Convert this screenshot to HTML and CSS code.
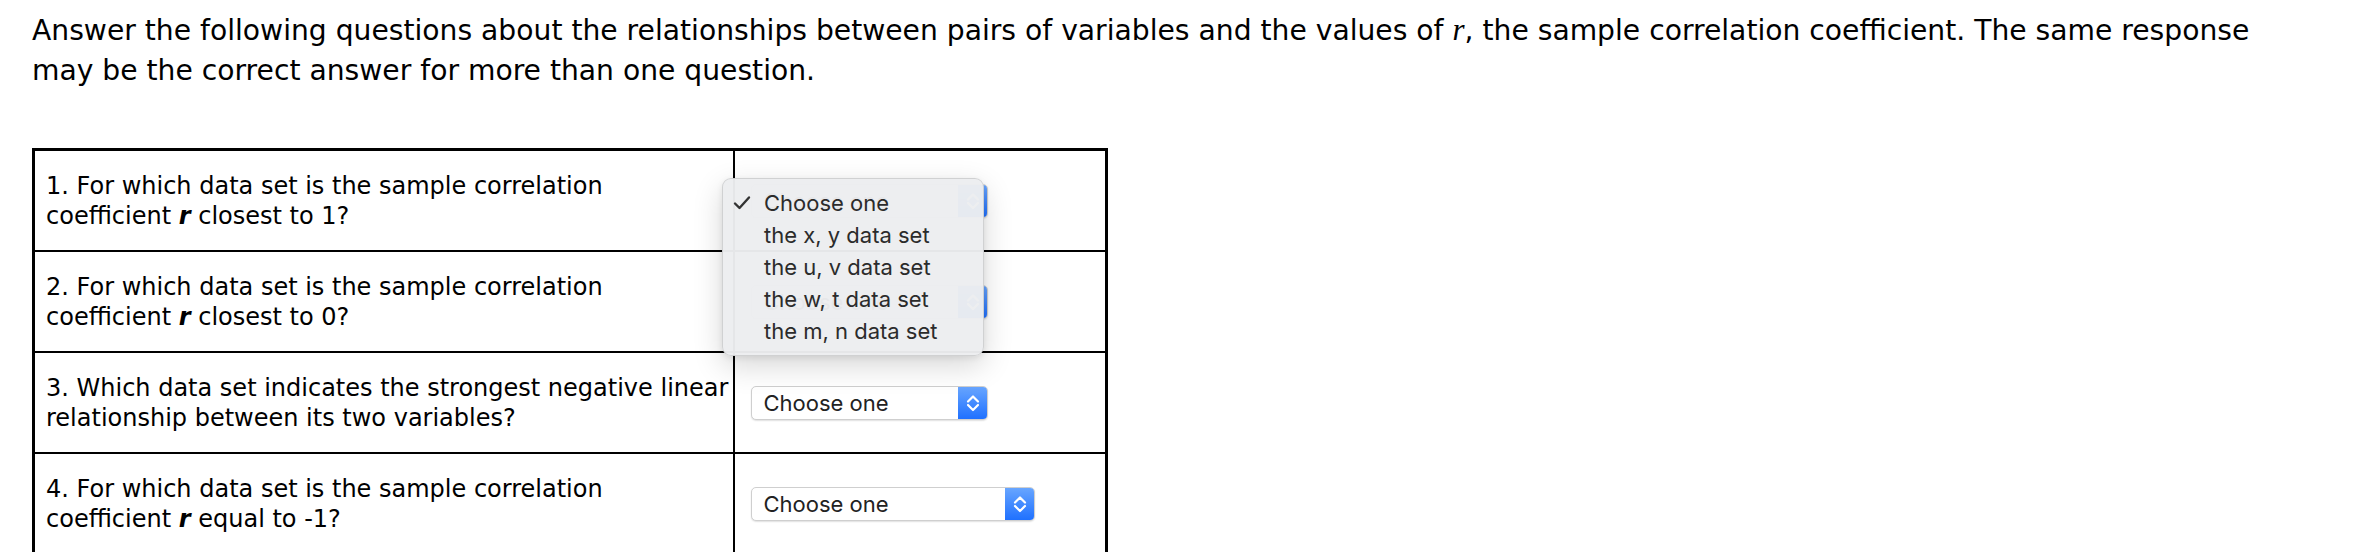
FILE: index.html
```html
<!DOCTYPE html>
<html>
<head>
<meta charset="utf-8">
<link rel="stylesheet" href="styles.css">
</head>
<body>
<div class="page">
  <p class="intro">Answer the following questions about the relationships between pairs of variables and the values of <span class="math">r</span>, the sample correlation coefficient. The same response may be the correct answer for more than one question.</p>
  <div class="quiz">
    <table class="qtable">
      <colgroup><col class="c1"><col class="c2"></colgroup>
      <tr>
        <td class="q">1. For which data set is the sample correlation coefficient <b><i>r</i></b> closest to 1?</td>
        <td class="a"><div class="select s-short"><span class="sel-text">Choose one</span><span class="sel-btn"><svg viewBox="0 0 30 34" width="30" height="34"><path d="M10 15.5 L15 10.5 L20 15.5 M10 19 L15 24 L20 19" fill="none" stroke="#fff" stroke-width="2.2" stroke-linecap="round" stroke-linejoin="round"/></svg></span></div></td>
      </tr>
      <tr>
        <td class="q">2. For which data set is the sample correlation coefficient <b><i>r</i></b> closest to 0?</td>
        <td class="a"><div class="select s-short"><span class="sel-text">Choose one</span><span class="sel-btn"><svg viewBox="0 0 30 34" width="30" height="34"><path d="M10 15.5 L15 10.5 L20 15.5 M10 19 L15 24 L20 19" fill="none" stroke="#fff" stroke-width="2.2" stroke-linecap="round" stroke-linejoin="round"/></svg></span></div></td>
      </tr>
      <tr>
        <td class="q">3. Which data set indicates the strongest negative linear relationship between its two variables?</td>
        <td class="a"><div class="select s-short"><span class="sel-text">Choose one</span><span class="sel-btn"><svg viewBox="0 0 30 34" width="30" height="34"><path d="M10 15.5 L15 10.5 L20 15.5 M10 19 L15 24 L20 19" fill="none" stroke="#fff" stroke-width="2.2" stroke-linecap="round" stroke-linejoin="round"/></svg></span></div></td>
      </tr>
      <tr>
        <td class="q">4. For which data set is the sample correlation coefficient <b><i>r</i></b> equal to -1?</td>
        <td class="a"><div class="select s-long"><span class="sel-text">Choose one</span><span class="sel-btn"><svg viewBox="0 0 30 34" width="30" height="34"><path d="M10 15.5 L15 10.5 L20 15.5 M10 19 L15 24 L20 19" fill="none" stroke="#fff" stroke-width="2.2" stroke-linecap="round" stroke-linejoin="round"/></svg></span></div></td>
      </tr>
    </table>
    <div class="menu">
      <div class="item checked"><svg class="check" viewBox="0 0 20 20" width="20" height="20"><path d="M3 10.5 L7.5 15 L17 4.5" fill="none" stroke="#333" stroke-width="2.4" stroke-linecap="round" stroke-linejoin="round"/></svg>Choose one</div>
      <div class="item">the x, y data set</div>
      <div class="item">the u, v data set</div>
      <div class="item">the w, t data set</div>
      <div class="item">the m, n data set</div>
    </div>
  </div>
</div>
</body>
</html>
```
FILE: styles.css
```css
html, body {
  margin: 0;
  padding: 0;
  background: #fff;
}
.page {
  padding: 10px 0 0 32px;
  font-family: "DejaVu Sans", sans-serif;
  color: #000;
}
.intro {
  margin: 0;
  max-width: 2250px;
  font-size: 28.2px;
  line-height: 40px;
}
.math {
  font-family: "Liberation Serif", serif;
  font-style: italic;
  font-size: 31px;
}
.quiz {
  position: relative;
  margin-top: 57px;
  width: 1073px;
}
.qtable {
  border-collapse: collapse;
  table-layout: fixed;
  width: 1073px;
  border: 3px solid #000;
}
.c1 { width: 700px; }
.c2 { width: 373px; }
.qtable td {
  border: 2px solid #000;
  height: 99px;
  padding: 0;
  vertical-align: middle;
}
.q {
  font-size: 24px;
  line-height: 30px;
  padding: 0 1px 0 11px !important;
}
.a {
  padding-left: 16px !important;
}
.select {
  display: flex;
  align-items: center;
  height: 34px;
  box-sizing: border-box;
  border: 1px solid #cfcfcf;
  border-radius: 5px;
  background: #fff;
  box-shadow: 0 1px 1.5px rgba(0,0,0,0.12);
  overflow: hidden;
  font-family: "Inter", "Liberation Sans", sans-serif;
  font-size: 22px;
  color: #222;
}
.s-short { width: 237px; }
.s-long { width: 284px; }
.sel-text {
  flex: 1;
  padding-left: 12px;
  white-space: nowrap;
}
.sel-btn {
  display: flex;
  width: 30px;
  height: 34px;
  margin: -1px -1px -1px 0;
  background: linear-gradient(#6aa7ff, #1d6fff);
}
.menu {
  position: absolute;
  left: 690px;
  top: 30px;
  width: 262px;
  box-sizing: border-box;
  padding: 8px 0;
  border-radius: 9px;
  background: rgba(236, 237, 240, 0.97);
  border: 1px solid rgba(0,0,0,0.12);
  box-shadow: 0 10px 30px rgba(0,0,0,0.16), 0 2px 6px rgba(0,0,0,0.08);
  font-family: "Inter", "Liberation Sans", sans-serif;
  font-size: 22px;
  color: #2b2b2b;
}
.item {
  position: relative;
  height: 32px;
  line-height: 32px;
  padding-left: 41px;
  white-space: nowrap;
}
.check {
  position: absolute;
  left: 9px;
  top: 6px;
}
```
